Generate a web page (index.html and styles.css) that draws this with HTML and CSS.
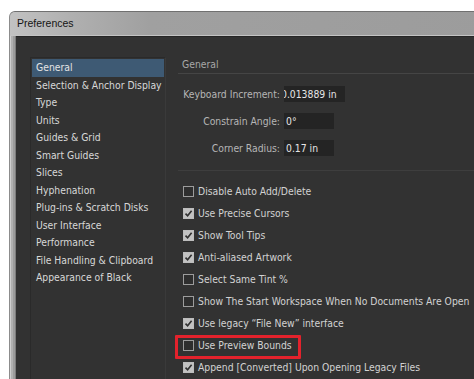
FILE: index.html
```html
<!DOCTYPE html>
<html>
<head>
<meta charset="utf-8">
<link rel="stylesheet" href="styles.css">
</head>
<body>
<div class="window">
  <div class="titlebar">Preferences</div>
  <div class="frame">
    <div class="content">
      <ul class="nav">
        <li class="selected">General</li>
        <li>Selection &amp; Anchor Display</li>
        <li>Type</li>
        <li>Units</li>
        <li>Guides &amp; Grid</li>
        <li>Smart Guides</li>
        <li>Slices</li>
        <li>Hyphenation</li>
        <li>Plug-ins &amp; Scratch Disks</li>
        <li>User Interface</li>
        <li>Performance</li>
        <li>File Handling &amp; Clipboard</li>
        <li>Appearance of Black</li>
      </ul>
      <div class="pane">
        <div class="section-head">General</div>
        <div class="fields">
          <label class="lbl">Keyboard Increment:</label>
          <span class="input wide"><span class="clip">0.013889 in</span></span>
          <label class="lbl">Constrain Angle:</label>
          <span class="input">0°</span>
          <label class="lbl">Corner Radius:</label>
          <span class="input">0.17 in</span>
        </div>
        <div class="sep"></div>
        <ul class="checks">
          <li><span class="box"></span>Disable Auto Add/Delete</li>
          <li><span class="box on"></span>Use Precise Cursors</li>
          <li><span class="box on"></span>Show Tool Tips</li>
          <li><span class="box on"></span>Anti-aliased Artwork</li>
          <li><span class="box"></span>Select Same Tint %</li>
          <li><span class="box"></span>Show The Start Workspace When No Documents Are Open</li>
          <li><span class="box on"></span>Use legacy “File New” interface</li>
          <li class="marked"><span class="box"></span>Use Preview Bounds<span class="redbox"></span></li>
          <li><span class="box on"></span>Append [Converted] Upon Opening Legacy Files</li>
        </ul>
      </div>
    </div>
  </div>
</div>
</body>
</html>
```

FILE: styles.css
```css
html, body {
  margin: 0;
  padding: 0;
  background: #ffffff;
  width: 474px;
  height: 379px;
  overflow: hidden;
}

.window {
  margin: 11px 0 0 9px;
  width: 480px;
  height: 380px;
  border-radius: 6px 0 0 0;
  border-top: 1px solid #707070;
  border-left: 1px solid #8c8c8c;
  background: #a2a2a2;
  overflow: hidden;
  display: flex;
  flex-direction: column;
}

.titlebar {
  height: 23px;
  padding-left: 7px;
  line-height: 23px;
  font-family: "Liberation Sans", Arial, sans-serif;
  font-size: 10.5px;
  color: #141414;
  background: linear-gradient(to right, #c2c2c2 0, #b0b0b0 60px, #a0a0a0 140px, #9c9c9c 100%);
  border-bottom: 1px solid #c4c4c4;
}

.frame {
  flex: 1;
  display: flex;
  padding-left: 6px;
  background: linear-gradient(to right, #cfcfcf 0 1px, #b0b0b0 1px 3px, #9c9c9c 3px 5px, #7c7c7c 5px 6px);
}

.content {
  flex: 1;
  display: flex;
  align-items: flex-start;
  background: #323232;
  border-top: 1px solid #262626;
  font-family: "DejaVu Sans Condensed", "DejaVu Sans", sans-serif;
  font-size: 10.3px;
}

.nav {
  list-style: none;
  margin: 20px 0 0 14px;
  padding: 1px;
  width: 132px;
  height: 400px;
  border: 1px solid #2a2a2a;
  border-right-color: #3a3a3a;
  border-bottom: none;
}

.nav li {
  height: 17.5px;
  line-height: 17.5px;
  padding-left: 4px;
  color: #d8d8d8;
  white-space: nowrap;
}

.nav li.selected {
  background: #3e5a74;
  color: #e4e4e4;
}

.pane {
  margin: 18px 0 0 12px;
  width: 320px;
}

.section-head {
  height: 18px;
  line-height: 19px;
  padding-left: 4px;
  color: #a8a8a8;
  border-bottom: 1px solid #454545;
}

.fields {
  display: grid;
  grid-template-columns: 102px auto;
  column-gap: 4px;
  row-gap: 11px;
  justify-items: start;
  align-items: center;
  margin-top: 12px;
}

.lbl {
  justify-self: end;
  color: #b6b6b6;
  white-space: nowrap;
}

.input {
  box-sizing: border-box;
  width: 50px;
  height: 16px;
  line-height: 16px;
  padding-left: 2px;
  background: #242424;
  color: #e6e6e6;
  overflow: hidden;
  white-space: nowrap;
}

.input.wide {
  width: 61px;
  padding-left: 0;
}

.clip {
  display: inline-block;
  margin-left: -3px;
}

.sep {
  margin-top: 14px;
  height: 1px;
  background: #3e3e3e;
  width: 320px;
}

.checks {
  list-style: none;
  margin: 9px 0 0 0;
  padding: 0;
}

.checks li {
  position: relative;
  display: flex;
  align-items: center;
  height: 22px;
  padding-left: 5px;
  color: #d2d2d2;
  white-space: nowrap;
}

.box {
  box-sizing: border-box;
  width: 11px;
  height: 11px;
  margin-right: 4px;
  border: 1px solid #9c9c9c;
  background: #2e2e2e;
  flex: none;
}

.box.on {
  border-color: #bdbdbd;
  background: #c2c2c2 url("data:image/svg+xml;utf8,<svg xmlns='http://www.w3.org/2000/svg' width='9' height='9' viewBox='0 0 9 9'><path d='M1.5 4.6 L3.6 6.8 L7.6 1.8' fill='none' stroke='%23303030' stroke-width='1.6'/></svg>") center / 9px 9px no-repeat;
}

.redbox {
  position: absolute;
  left: -3px;
  top: 1px;
  width: 126px;
  height: 24px;
  box-sizing: border-box;
  border: 3px solid #e3222c;
  border-radius: 1px;
}
```
